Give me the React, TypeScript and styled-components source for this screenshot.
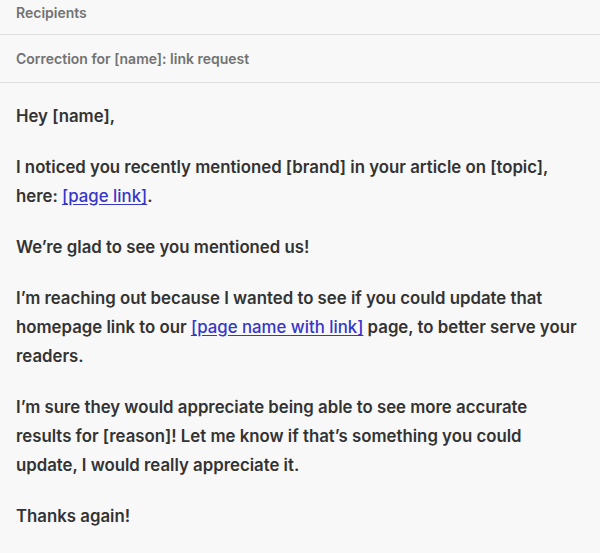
import React from "react";
import styled, { createGlobalStyle } from "styled-components";

const Global = createGlobalStyle`
  html, body { margin: 0; padding: 0; background: #f8f8f8; }
  body { font-family: Inter, "Noto Sans", sans-serif; }
`;

const Page = styled.div`
  width: 600px;
  height: 553px;
  background: #f8f8f8;
  overflow: hidden;
`;

const FieldRow = styled.div`
  box-sizing: border-box;
  padding: 0 16px;
  display: flex;
  align-items: center;
  border-bottom: 1.5px solid #dedede;
  font-size: 14px;
  font-weight: 600;
  color: #727272;
`;

const FirstRow = styled(FieldRow)`
  height: 35px;
  padding-bottom: 10px;
`;

const SecondRow = styled(FieldRow)`
  height: 48px;
`;

const Body = styled.div`
  padding: 19px 16px 0;
  color: #333333;
  font-size: 16.8px;
  font-weight: 600;
  line-height: 29px;
`;

const Para = styled.p`
  margin: 0 0 22px;
`;

const Link = styled.a`
  color: #3636c8;
  font-weight: 500;
  text-decoration: underline;
  text-underline-offset: 2px;
`;

export default function App() {
  return (
    <Page>
      <Global />
      <FirstRow>Recipients</FirstRow>
      <SecondRow>Correction for [name]: link request</SecondRow>
      <Body>
        <Para>Hey [name],</Para>
        <Para>
          I noticed you recently mentioned [brand] in your article on [topic],
          here: <Link href="#">[page link]</Link>.
        </Para>
        <Para>We’re glad to see you mentioned us!</Para>
        <Para>
          I’m reaching out because I wanted to see if you could update that
          homepage link to our <Link href="#">[page name with link]</Link> page,
          to better serve your readers.
        </Para>
        <Para>
          I’m sure they would appreciate being able to see more accurate results
          for [reason]! Let me know if that’s something you could update, I would
          really appreciate it.
        </Para>
        <Para>Thanks again!</Para>
      </Body>
    </Page>
  );
}
